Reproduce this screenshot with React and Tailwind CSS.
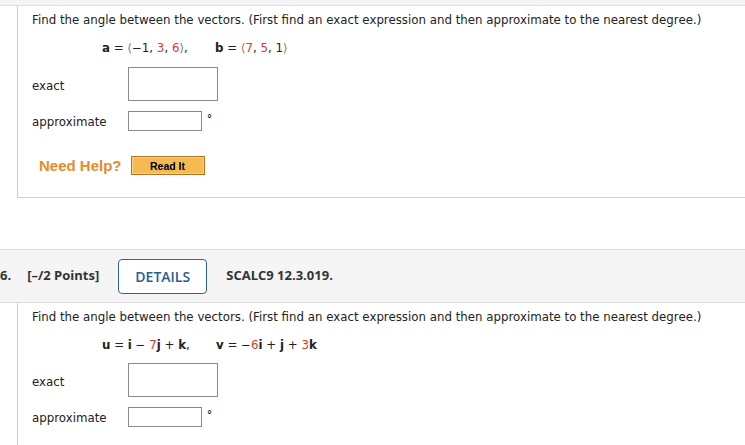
import React from "react";

const R = ({ children }) => <span className="text-[#e0382b]">{children}</span>;
const B = ({ children }) => <b className="font-bold">{children}</b>;
const G = ({ children }) => <span className="text-[#777]">{children}</span>;

const Q = "Find the angle between the vectors. (First find an exact expression and then approximate to the nearest degree.)";
const VERDANA = { fontFamily: '"DejaVu Sans", Verdana, sans-serif' };

function Inputs() {
  return (
    <>
      <div className="mt-[11px] flex items-center">
        <div className="w-[96px] pt-[3px]">exact</div>
        <div className="w-[90px] h-[34px] border border-[#8a8a8a] bg-white" />
      </div>
      <div className="mt-[10px] flex items-center">
        <div className="w-[96px] pt-[1px]">approximate</div>
        <div className="w-[74px] h-[20px] border border-[#8a8a8a] bg-white" />
        <div className="ml-[5px] -mt-[4px] text-[10px] font-bold">°</div>
      </div>
    </>
  );
}

export default function App() {
  const v1 = (
    <>
      <span className="w-[113px]"><B>a</B> = <G>⟨</G>−1, <R>3</R>, <R>6</R><G>⟩</G>,</span>
      <span><B>b</B> = <G>⟨</G><R>7</R>, <R>5</R>, 1<G>⟩</G></span>
    </>
  );
  const v2 = (
    <>
      <span className="w-[114px]"><B>u</B> = <B>i</B> − <R>7</R><B>j</B> + <B>k</B>,</span>
      <span><B>v</B> = −<R>6</R><B>i</B> + <B>j</B> + <R>3</R><B>k</B></span>
    </>
  );
  return (
    <div className="w-[745px] h-[445px] overflow-hidden bg-white">
      <div className="h-[6px] bg-[#f5f5f5] border-b border-[#dedede]" />
      <div className="ml-[17px] border-l border-b border-[#cfcfcf] pl-[14px] pt-[6px] pb-[22px] text-[11.8px] leading-[16px] text-[#222]" style={VERDANA}>
        <div className="whitespace-nowrap">{Q}</div>
        <div className="mt-[12px] pl-[70px] flex whitespace-nowrap">{v1}</div>
        <Inputs />
        <div className="mt-[25px] flex items-center" style={{ fontFamily: '"Liberation Sans", Arial, sans-serif' }}>
          <span className="ml-[7px] text-[15px] font-bold text-[#e8892c]">Need Help?</span>
          <span className="ml-[9px] w-[74px] h-[19px] border border-[#b96f24] bg-[#f5bb52] flex items-center justify-center text-[10.5px] font-bold text-black shadow-[inset_0_0_0_1px_#f9d587]">Read It</span>
        </div>
      </div>
      <div className="mt-[51px] h-[54px] bg-[#f5f5f5] border-t border-b border-[#dedede] flex items-center text-[13px] font-bold text-[#333]" style={{ fontFamily: '"Open Sans", sans-serif' }}>
        <span>6.</span>
        <span className="ml-[16px]">[–/2 Points]</span>
        <span className="ml-[19px] w-[89px] h-[35px] border border-[#2f6599] rounded-[4px] flex items-center justify-center text-[14px] font-semibold text-[#2a5d8f] bg-white">DETAILS</span>
        <span className="ml-[19px]">SCALC9 12.3.019.</span>
      </div>
      <div className="ml-[17px] border-l border-[#cfcfcf] pl-[14px] pt-[6px] pb-[22px] text-[11.8px] leading-[16px] text-[#222]" style={VERDANA}>
        <div className="whitespace-nowrap">{Q}</div>
        <div className="mt-[12px] pl-[70px] flex whitespace-nowrap">{v2}</div>
        <div className="-mt-[1px]">
          <Inputs />
        </div>
      </div>
    </div>
  );
}
